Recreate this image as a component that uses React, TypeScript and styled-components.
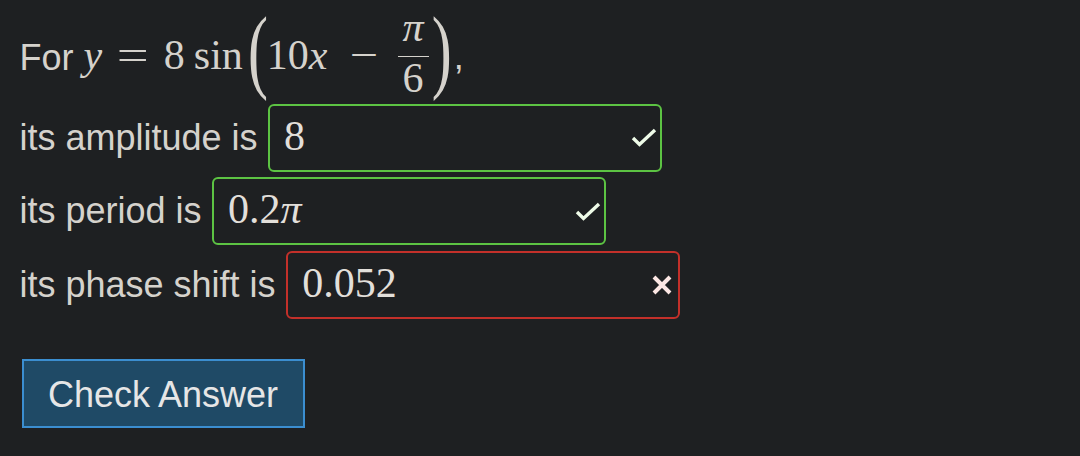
import React from "react";
import styled, { createGlobalStyle } from "styled-components";

const GlobalStyle = createGlobalStyle`
  html, body {
    margin: 0;
    padding: 0;
    background: #1e2022;
  }
  body {
    min-height: 100vh;
    font-family: "Liberation Sans", Arial, sans-serif;
    color: #d5d2cc;
  }
`;

/**
 * Page wrapper.
 */
const Page = styled.div`
  padding: 5.5px 16px 20px 19.5px;
  font-size: 36px;
`;

/**
 * First line with the rendered equation.
 */
const Intro = styled.div`
  line-height: 1.15;
  white-space: nowrap;
`;

const MathSpan = styled.span`
  font-family: "Liberation Serif", "Times New Roman", serif;
  font-size: 42px;
  line-height: 1;
`;

const Var = styled.span`
  font-style: italic;
`;

const Op = styled.span<{ $ml: number; $mr: number; $sx?: number }>`
  display: inline-block;
  margin-left: ${(p) => p.$ml}px;
  margin-right: ${(p) => p.$mr}px;
  transform: scaleX(${(p) => p.$sx ?? 1});
`;

const Gap = styled.span<{ $w: number }>`
  display: inline-block;
  margin-left: ${(p) => p.$w}px;
`;

/**
 * Tall delimiter: a normal glyph stretched vertically around its baseline.
 */
const Paren = styled.span<{ $ml: number; $mr: number }>`
  display: inline-block;
  font-family: "Liberation Serif", "Times New Roman", serif;
  font-size: 60px;
  line-height: 60px;
  vertical-align: -11.5px;
  margin-left: ${(p) => p.$ml}px;
  margin-right: ${(p) => p.$mr}px;
  transform-origin: 50% 50.3px;
  transform: scaleY(1.54);
`;

const Frac = styled.span`
  display: inline-flex;
  flex-direction: column;
  align-items: stretch;
  vertical-align: 28.6px;
  font-family: "Liberation Serif", "Times New Roman", serif;
  font-size: 42px;
  line-height: 1;
`;

const Num = styled.span`
  text-align: center;
  padding: 0 5px 8.5px;
  border-bottom: 1.5px solid #d5d2cc;
`;

const Den = styled.span`
  text-align: center;
  padding: 0 5px;
`;

const Comma = styled.span`
  margin-left: 2px;
`;

/**
 * Question rows.
 */
const Rows = styled.div`
  display: flex;
  flex-direction: column;
  gap: 5.5px;
  margin-top: 4.6px;
`;

const Row = styled.div`
  display: flex;
  align-items: center;
  gap: 10px;
  line-height: normal;
`;

const Label = styled.span`
  white-space: nowrap;
`;

const AnswerBox = styled.div<{ $ok: boolean }>`
  box-sizing: border-box;
  display: flex;
  align-items: center;
  width: 394px;
  height: 68px;
  padding: 0 0 4px 14.5px;
  border: 2px solid ${(p) => (p.$ok ? "#5cc343" : "#c3302a")};
  border-radius: 6px;
  background: #1e2022;
`;

const AnswerText = styled.span`
  flex: 1;
  font-family: "Liberation Serif", "Times New Roman", serif;
  font-size: 42px;
  line-height: 1;
  color: #e2dfda;
`;

const Mark = styled.span<{ $mr: number }>`
  display: flex;
  margin-right: ${(p) => p.$mr}px;
  margin-top: 4px;
`;

const CheckButton = styled.button`
  box-sizing: border-box;
  display: block;
  margin: 40.7px 0 0 2.5px;
  width: 283px;
  height: 69px;
  padding: 3px 20px 0 24px;
  border: 2px solid #3b8ed0;
  background: #1f4a66;
  color: #e6e6e6;
  font-family: "Liberation Sans", Arial, sans-serif;
  font-size: 36px;
  text-align: left;
  cursor: pointer;
`;

const CheckIcon = () => (
  <svg width="26" height="19" viewBox="0 0 26 19">
    <polyline
      points="2,10 8.5,16.5 24,2"
      fill="none"
      stroke="#eefbe8"
      strokeWidth="3.4"
    />
  </svg>
);

const CrossIcon = () => (
  <svg width="22" height="22" viewBox="0 0 22 22">
    <path
      d="M3 3 L19 19 M19 3 L3 19"
      stroke="#fde8e5"
      strokeWidth="4"
    />
  </svg>
);

type Answer = {
  label: string;
  value: React.ReactNode;
  ok: boolean;
};

const answers: Answer[] = [
  { label: "its amplitude is", value: "8", ok: true },
  {
    label: "its period is",
    value: (
      <>
        0.2<Var>π</Var>
      </>
    ),
    ok: true,
  },
  { label: "its phase shift is", value: "0.052", ok: false },
];

const App: React.FC = () => (
  <>
    <GlobalStyle />
    <Page>
      <Intro>
        For{" "}
        <MathSpan>
          <Var>y</Var>
          <Op $ml={19} $mr={19} $sx={1.35}>
            =
          </Op>
          8<Gap $w={9} />
          sin
        </MathSpan>
        <Paren $ml={5} $mr={-1}>
          (
        </Paren>
        <MathSpan>
          10<Var>x</Var>
          <Op $ml={24} $mr={22.4} $sx={1.2}>
            −
          </Op>
        </MathSpan>
        <Frac>
          <Num>
            <Var>π</Var>
          </Num>
          <Den>6</Den>
        </Frac>
        <Paren $ml={3} $mr={0}>
          )
        </Paren>
        <Comma>,</Comma>
      </Intro>
      <Rows>
        {answers.map((a) => (
          <Row key={a.label}>
            <Label>{a.label}</Label>
            <AnswerBox $ok={a.ok}>
              <AnswerText>{a.value}</AnswerText>
              {a.ok ? (
                <Mark $mr={3}>
                  <CheckIcon />
                </Mark>
              ) : (
                <Mark $mr={4.5}>
                  <CrossIcon />
                </Mark>
              )}
            </AnswerBox>
          </Row>
        ))}
      </Rows>
      <CheckButton>Check Answer</CheckButton>
    </Page>
  </>
);

export default App;
